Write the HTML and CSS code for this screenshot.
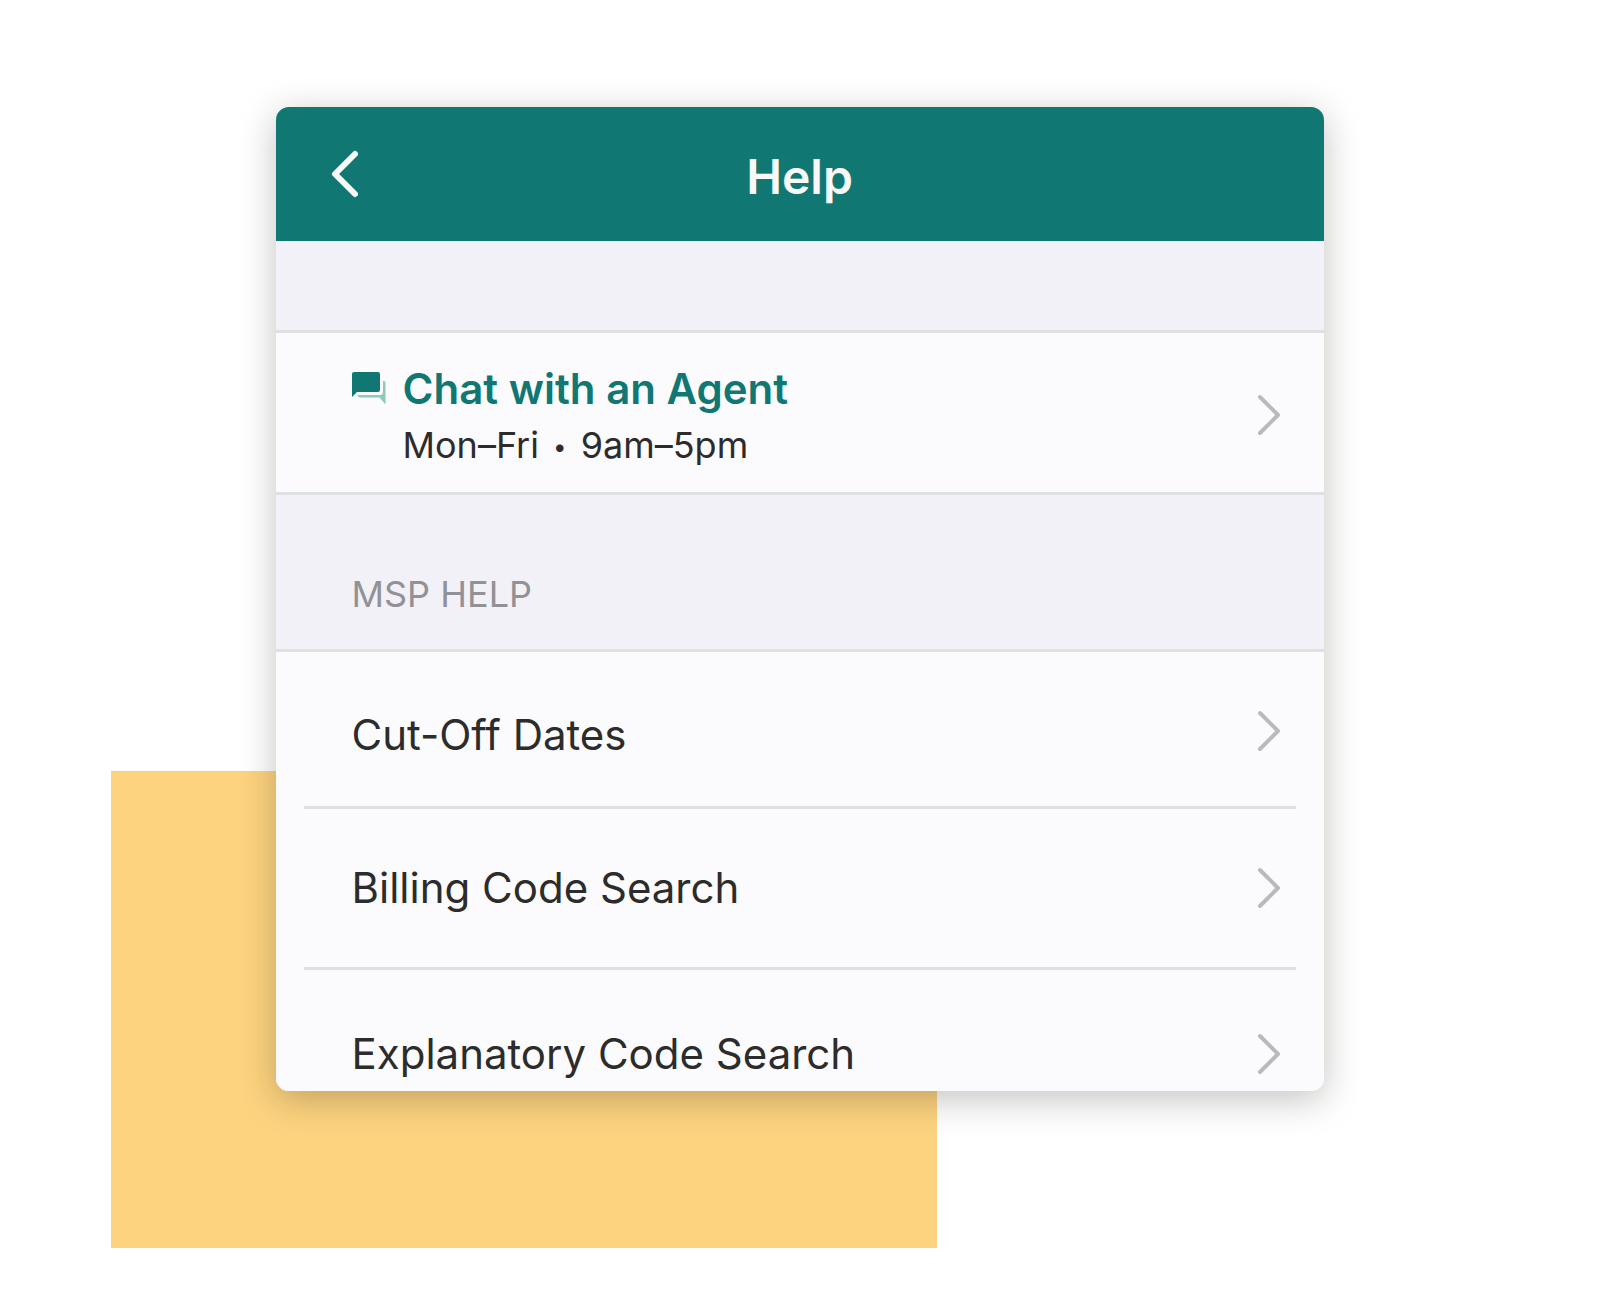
FILE: index.html
```
<!DOCTYPE html>
<html lang="en">
<head>
    <meta charset="UTF-8">
    <meta name="viewport" content="width=device-width, initial-scale=1.0">
    <title>Help</title>
    <link rel="stylesheet" href="styles.css">
</head>
<body>
    <div class="stage">
        <div class="backdrop"></div>

        <main class="card">
            <header class="header">
                <button class="back" type="button" aria-label="Back">
                    <svg width="28" height="48" viewBox="0 0 28 48"><path d="M25 4 5 24l20 20"/></svg>
                </button>
                <h1>Help</h1>
            </header>

            <a class="row chat" href="#">
                <svg class="chat-icon" width="34" height="33" viewBox="0 0 34 33">
                    <path fill="#8ccabd" d="M31 9h1q1.500 0 1.500 2v21.500l-6-7H8q-2 0-2.500-2.500H28q3 0 3-3z"/>
                    <path fill="#117773" d="M2 0h24a2 2 0 0 1 2 2v16a2 2 0 0 1-2 2H5l-5 5V2a2 2 0 0 1 2-2z"/>
                </svg>
                <span class="chat-text">
                    <strong>Chat with an Agent</strong>
                    <span class="hours">Mon–Fri <span class="dot">•</span> 9am–5pm</span>
                </span>
                <svg class="chevron" width="24" height="42" viewBox="0 0 24 42"><path d="M3 3l18 18L3 39"/></svg>
            </a>

            <h2>MSP HELP</h2>

            <ul class="list">
                <li>
                    <a class="row" href="#">
                        <span>Cut-Off Dates</span>
                        <svg class="chevron" width="24" height="42" viewBox="0 0 24 42"><path d="M3 3l18 18L3 39"/></svg>
                    </a>
                </li>
                <li>
                    <a class="row" href="#">
                        <span>Billing Code Search</span>
                        <svg class="chevron" width="24" height="42" viewBox="0 0 24 42"><path d="M3 3l18 18L3 39"/></svg>
                    </a>
                </li>
                <li>
                    <a class="row" href="#">
                        <span>Explanatory Code Search</span>
                        <svg class="chevron" width="24" height="42" viewBox="0 0 24 42"><path d="M3 3l18 18L3 39"/></svg>
                    </a>
                </li>
            </ul>
        </main>
    </div>
</body>
</html>
```

FILE: styles.css
```
* {
    box-sizing: border-box;
    margin: 0;
    padding: 0;
}

body {
    font-family: Inter, "Liberation Sans", sans-serif;
    font-size: 42px;
    line-height: 56px;
    color: #2c2c2c;
    background-color: #fff;
    padding: 107px 24px 210px;
}

.stage {
    position: relative;
    max-width: 1048px;
    margin: 0 auto;
}

/* yellow block behind the card */
.backdrop {
    position: absolute;
    left: -165px;
    bottom: -157px;
    width: 826px;
    height: 477px;
    background-color: #fdd37f;
}

.card {
    position: relative;
    max-height: 984px;
    overflow: hidden;
    border-radius: 13px;
    background-color: #f2f1f7;
    box-shadow: 0 8px 36px rgba(20, 20, 10, 0.26);
}

.header {
    display: grid;
    grid-template-columns: 1fr auto 1fr;
    align-items: center;
    height: 134px;
    padding: 0 54px;
    margin-bottom: 89px;
    background-color: #117773;
}

.back {
    justify-self: start;
    display: flex;
    background: none;
    border: none;
    cursor: pointer;
}

.back path {
    fill: none;
    stroke: #f8f9f7;
    stroke-width: 6;
    stroke-linecap: round;
    stroke-linejoin: round;
}

h1 {
    padding-top: 6px;
    font-size: 48px;
    font-weight: 600;
    color: #f8f9f7;
}

.row {
    display: flex;
    align-items: center;
    min-height: 158px;
    padding: 0 43px 0 76px;
    color: inherit;
    text-decoration: none;
    background-color: #fbfbfd;
}

.chevron {
    flex: none;
    margin-left: auto;
}

.chevron path {
    fill: none;
    stroke: #bababc;
    stroke-width: 4;
    stroke-linecap: round;
    stroke-linejoin: round;
}

.chat {
    min-height: 165px;
    padding-top: 4px;
    border-top: 3px solid #dee1e4;
    border-bottom: 3px solid #dee1e4;
}

.chat-icon {
    align-self: flex-start;
    margin-top: 35px;
}

.chat-text {
    display: flex;
    flex-direction: column;
    padding: 4px 0 0 17px;
}

.chat-text strong {
    font-weight: 600;
    color: #117773;
}

.hours {
    font-size: 36px;
}

.dot {
    margin: 0 4px;
    font-size: 24px;
    vertical-align: 3px;
    line-height: 24px;
}

h2 {
    padding: 71px 76px 27px;
    font-size: 36px;
    font-weight: 400;
    color: #929195;
    border-bottom: 3px solid #dee1e4;
}

.list {
    list-style: none;
    background-color: #fbfbfd;
}

.list li + li::before {
    content: "";
    display: block;
    height: 3px;
    margin: 0 28px;
    background-color: #dee1e4;
}

.list li:first-child .row {
    min-height: 154px;
    padding-top: 4px;
}

.list li:first-child span {
    padding-top: 8px;
}

.list li:last-child .row {
    min-height: 168px;
}
```
